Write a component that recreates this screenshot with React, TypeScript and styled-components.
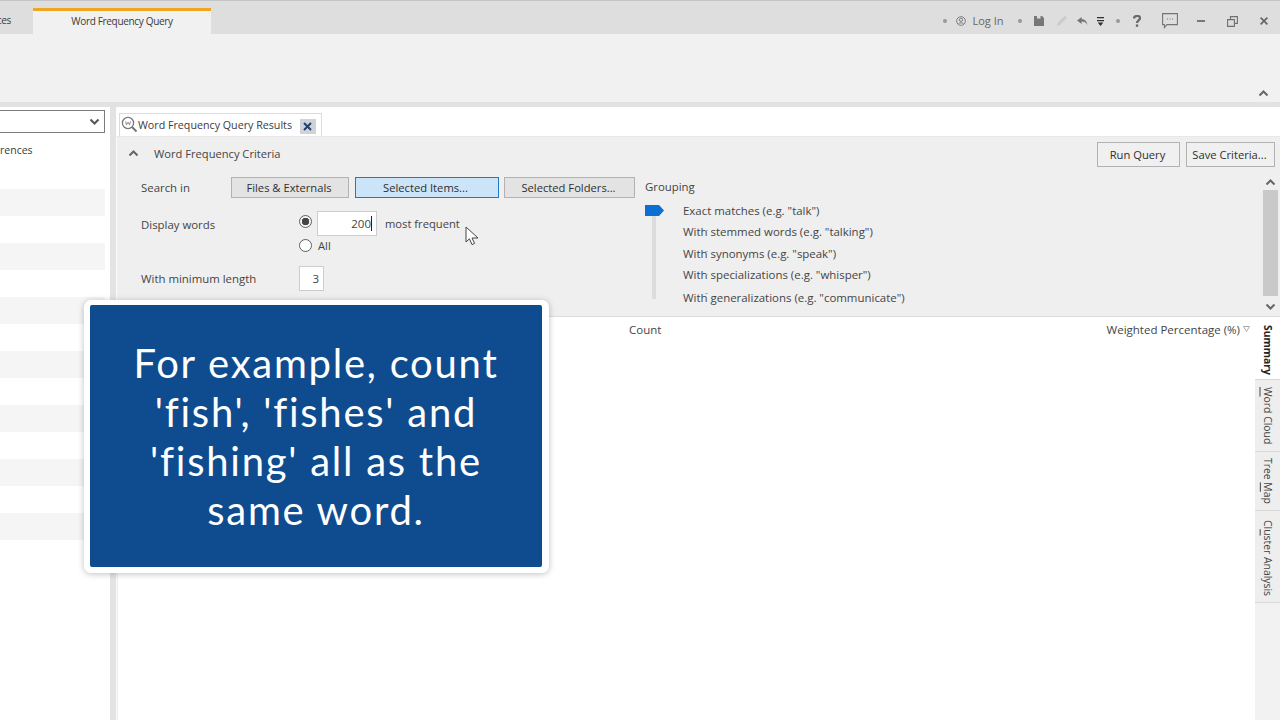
import styled, { createGlobalStyle } from 'styled-components';

const GlobalStyle = createGlobalStyle`
  html, body {
    margin: 0;
    padding: 0;
    background: #ffffff;
    overflow: hidden;
  }
  body {
    font-family: "Open Sans", "Noto Sans", sans-serif;
    font-size: 12px;
    color: #3c3c3c;
  }
`;

const Page = styled.div`
  position: relative;
  width: 1280px;
  height: 720px;
  overflow: hidden;
  display: flex;
  flex-direction: column;
`;

const TitleBar = styled.div`
  height: 33px;
  flex: none;
  border-top: 1px solid #c4c4c4;
  background: #dedede;
  display: flex;
  align-items: flex-end;
`;

const OldTab = styled.div`
  width: 33px;
  height: 26px;
  flex: none;
  box-sizing: border-box;
  padding: 0 22px 2px 0;
  display: flex;
  align-items: center;
  justify-content: flex-end;
  font-size: 10px;
  letter-spacing: -0.3px;
  color: #3a3a3a;
  overflow: hidden;
`;

const ActiveTab = styled.div`
  width: 178px;
  height: 26px;
  flex: none;
  box-sizing: border-box;
  padding-bottom: 3px;
  display: flex;
  align-items: center;
  justify-content: center;
  background: #f1f1f1;
  border-top: 3px solid #f0a51e;
  font-size: 10px;
  letter-spacing: -0.33px;
  color: #3a3a3a;
`;

const WindowTools = styled.div`
  margin-left: auto;
  height: 26px;
  display: flex;
  align-items: center;
  color: #6d6d6d;
`;

const Dot = styled.span<{ $gap: number }>`
  width: 4px;
  height: 4px;
  border-radius: 50%;
  background: #999999;
  margin-right: ${(p) => p.$gap}px;
  flex: none;
`;

const ToolIcon = styled.svg<{ $gap: number }>`
  flex: none;
  margin-right: ${(p) => p.$gap}px;
`;

const LogIn = styled.span`
  font-size: 11px;
  line-height: 13px;
  margin-top: -2px;
  color: #666666;
  margin-right: 14.5px;
`;

const Ribbon = styled.div`
  height: 68px;
  flex: none;
  background: #f1f1f1;
  display: flex;
  align-items: flex-end;
  justify-content: flex-end;
  padding: 0 11px 5px 0;
  box-sizing: border-box;
`;

const RibbonEdge = styled.div`
  height: 5px;
  flex: none;
  background: #e2e2e2;
`;

const Main = styled.div`
  flex: 1;
  display: flex;
  min-height: 0;
`;

const LeftPanel = styled.div`
  width: 110px;
  flex: none;
  padding-top: 3px;
  background: #ffffff;
`;

const FolderSelect = styled.div`
  width: 105px;
  height: 23px;
  box-sizing: border-box;
  border: 1px solid #7c7c7c;
  border-left: 0;
  display: flex;
  align-items: center;
  justify-content: flex-end;
  padding-right: 4px;
  color: #555555;
`;

const SearchRows = styled.div`
  margin-top: 2px;
  width: 105px;
`;

const SearchRow = styled.div<{ $striped?: boolean }>`
  height: 27px;
  background: ${(p) => (p.$striped ? '#f5f5f5' : '#ffffff')};
  font-size: 10.5px;
  line-height: 31px;
  color: #3c3c3c;
`;

const Splitter = styled.div`
  width: 7px;
  flex: none;
  background: linear-gradient(to right, #e3e3e3 0 5.5px, #fbfbfb 5.5px);
`;

const ResultsArea = styled.div`
  flex: 1;
  min-width: 0;
  display: flex;
  flex-direction: column;
`;

const DocTabs = styled.div`
  height: 29px;
  flex: none;
  display: flex;
  align-items: flex-end;
  padding-left: 2px;
  background: #ffffff;
  border-bottom: 1px solid #e8e8e8;
`;

const DocTab = styled.div`
  height: 23px;
  width: 203px;
  box-sizing: border-box;
  border: 1px solid #dcdcdc;
  border-bottom: 0;
  display: flex;
  align-items: center;
  padding-left: 1px;
  font-size: 10.7px;
  color: #3c3c3c;
  white-space: nowrap;
  svg {
    flex: none;
  }
`;

const DocClose = styled.span`
  width: 16px;
  height: 15px;
  flex: none;
  margin-left: 8px;
  margin-top: 3px;
  background: #cfd3d8;
  display: flex;
  align-items: center;
  justify-content: center;
`;

const Criteria = styled.div`
  height: 179px;
  flex: none;
  background: #efefef;
  border-bottom: 1px solid #dcdcdc;
`;

const CriteriaHead = styled.div`
  height: 32px;
  display: flex;
  align-items: center;
  padding: 0 5px 0 11px;
`;

const CriteriaTitle = styled.span`
  margin-left: 15px;
  font-size: 11.15px;
  color: #444444;
`;

const HeadButtons = styled.div`
  margin-left: auto;
  margin-top: 3px;
  display: flex;
  gap: 6px;
`;

const Button = styled.button<{ $width: number; $height?: number; $selected?: boolean; $flat?: boolean }>`
  width: ${(p) => p.$width}px;
  height: ${(p) => p.$height ?? 25}px;
  flex: none;
  padding: 0 2px 1px 0;
  box-sizing: border-box;
  border: 1px solid ${(p) => (p.$selected ? '#1f78c8' : '#b2b2b2')};
  background: ${(p) => (p.$selected ? '#cce4f7' : p.$flat ? '#f0f0f0' : '#e3e3e3')};
  font-family: inherit;
  font-size: 11.2px;
  color: #2f2f2f;
`;

const CriteriaBody = styled.div`
  display: flex;
  height: 147px;
`;

const FormColumn = styled.div`
  width: 528px;
  flex: none;
  padding: 8px 0 0 24px;
  box-sizing: border-box;
  display: flex;
  flex-direction: column;
`;

const FormRow = styled.div`
  display: flex;
  align-items: center;
`;

const FieldLabel = styled.span`
  width: 90px;
  flex: none;
  font-size: 11.4px;
  color: #444444;
`;

const SearchButtons = styled.div`
  display: flex;
  gap: 5.5px;
`;

const DisplayRow = styled.div`
  display: flex;
  margin-top: 13px;
`;

const DisplayLabel = styled(FieldLabel)`
  width: 158px;
  padding-top: 6px;
`;

const DisplayOptions = styled.div`
  display: flex;
  flex-direction: column;
  gap: 2px;
`;

const RadioRow = styled.div`
  display: flex;
  align-items: center;
  font-size: 11.2px;
  color: #444444;
`;

const Radio = styled.span<{ $checked?: boolean }>`
  width: 13px;
  height: 13px;
  box-sizing: border-box;
  border: 1px solid #5f5f5f;
  border-radius: 50%;
  background: ${(p) => (p.$checked ? 'radial-gradient(circle, #444 0 3.5px, #f4f4f4 4px)' : '#ffffff')};
  flex: none;
  margin-top: ${(p) => (p.$checked ? '-5px' : '0')};
`;

const RadioText = styled.span<{ $gap: number }>`
  margin-left: ${(p) => p.$gap}px;
`;

const NumberBox = styled.div<{ $width: number; $height: number; $gap?: number }>`
  width: ${(p) => p.$width}px;
  height: ${(p) => p.$height}px;
  margin-left: ${(p) => p.$gap ?? 0}px;
  box-sizing: border-box;
  border: 1px solid #cdcdcd;
  background: #ffffff;
  display: flex;
  align-items: center;
  justify-content: flex-end;
  padding-right: 4px;
  font-size: 11.5px;
  color: #444444;
`;

const Caret = styled.span`
  width: 1px;
  height: 15px;
  background: #222222;
`;

const LengthLabel = styled(FieldLabel)`
  width: 158px;
`;

const LengthRow = styled(FormRow)`
  margin-top: 13px;
`;

const GroupingColumn = styled.div`
  flex: 1;
  display: flex;
  flex-direction: column;
`;

const GroupingTitle = styled.div`
  font-size: 11.4px;
  color: #444444;
  margin-top: 10px;
`;

const GroupingList = styled.div`
  position: relative;
  margin-top: 6px;
  padding-left: 38px;
  display: flex;
  flex-direction: column;
`;

const Track = styled.span`
  position: absolute;
  left: 7px;
  top: 15px;
  width: 4px;
  height: 84px;
  background: #dcdcdc;
`;

const Thumb = styled.svg`
  position: absolute;
  left: 0;
  top: 5px;
`;

const GroupingItem = styled.div<{ $height: number }>`
  position: relative;
  height: ${(p) => p.$height}px;
  display: flex;
  align-items: center;
  font-size: 11.45px;
  color: #444444;
  white-space: nowrap;
  &::before {
    content: '';
    position: absolute;
    left: 22px;
    top: 9px;
    width: 3px;
    height: 1px;
    background: #b4b4b4;
  }
`;

const ScrollBar = styled.div`
  width: 15px;
  margin: 5px 2px 0 auto;
  display: flex;
  flex-direction: column;
  align-items: center;
  color: #666666;
`;

const ScrollEnd = styled.div<{ $height: number }>`
  height: ${(p) => p.$height}px;
  flex: none;
  display: flex;
  align-items: center;
  justify-content: center;
`;

const ScrollThumb = styled.div`
  flex: 1;
  width: 15px;
  background: #c9c9c9;
`;

const ResultsBody = styled.div`
  flex: 1;
  display: flex;
  min-height: 0;
`;

const Table = styled.div`
  flex: 1;
  min-width: 0;
  border-left: 1px solid #ededed;
`;

const TableHead = styled.div`
  height: 24px;
  display: flex;
  align-items: center;
  font-size: 11.5px;
  color: #444444;
  padding: 0 5px 0 511px;
`;

const WeightHead = styled.span`
  margin-left: auto;
  display: flex;
  align-items: center;
  gap: 3px;
`;

const SideTabs = styled.div`
  width: 25px;
  flex: none;
  background: #f2f2f2;
  display: flex;
  flex-direction: column;
  font-size: 10.4px;
  color: #3c3c3c;
`;

const SideTab = styled.div<{ $height: number; $pad: number; $active?: boolean }>`
  height: ${(p) => p.$height}px;
  box-sizing: border-box;
  writing-mode: vertical-rl;
  display: flex;
  align-items: center;
  padding: ${(p) => p.$pad}px 0 0 0;
  font-weight: ${(p) => (p.$active ? 700 : 400)};
  color: ${(p) => (p.$active ? '#222222' : '#444444')};
  background: ${(p) => (p.$active ? '#ffffff' : '#eeeeee')};
  border-bottom: 1px solid #d8d8d8;
  white-space: nowrap;
  u {
    text-underline-offset: 1px;
  }
`;

const Callout = styled.div`
  position: absolute;
  left: 84px;
  top: 300px;
  width: 465px;
  height: 273px;
  box-sizing: border-box;
  padding: 5px 7px 6px 6px;
  background: #ffffff;
  border-radius: 7px;
  box-shadow: 0 1px 6px rgba(0, 0, 0, 0.25);
  display: flex;
`;

const CalloutInner = styled.div`
  flex: 1;
  padding-top: 2px;
  background: #0f4c8f;
  border-radius: 2px;
  display: flex;
  align-items: center;
  justify-content: center;
  text-align: center;
  color: #ffffff;
  font-family: Lato, "Open Sans", sans-serif;
  font-size: 40px;
  line-height: 49px;
  letter-spacing: 1.75px;
`;

const Pointer = styled.svg`
  position: absolute;
  left: 465px;
  top: 226px;
`;

const Chevron = ({ up = true, color = '#666666' }: { up?: boolean; color?: string }) => (
  <svg width="11" height="7" viewBox="0 0 11 7" fill="none">
    <path d={up ? 'M1.5 5.5 5.5 1.5l4 4' : 'M1.5 1.5l4 4 4-4'} stroke={color} strokeWidth="2" />
  </svg>
);

const groupingItems = [
  { label: 'Exact matches (e.g. "talk")', height: 21 },
  { label: 'With stemmed words (e.g. "talking")', height: 21 },
  { label: 'With synonyms (e.g. "speak")', height: 23 },
  { label: 'With specializations (e.g. "whisper")', height: 19 },
  { label: 'With generalizations (e.g. "communicate")', height: 27 },
];

const rows = [false, false, true, false, true, false, true, false, true, false, true, false, true, false, true];

const App = () => (
  <Page>
    <GlobalStyle />
    <TitleBar>
      <OldTab>ces</OldTab>
      <ActiveTab>Word Frequency Query</ActiveTab>
      <WindowTools>
        <Dot $gap={9} />
        <ToolIcon $gap={6} width="10" height="10" viewBox="0 0 11 11" fill="none" stroke="#777" strokeWidth="1">
          <circle cx="5.5" cy="5.5" r="4.8" />
          <circle cx="5.5" cy="4.2" r="1.8" />
          <path d="M2.5 8.8c1-1.7 5-1.7 6 0" />
        </ToolIcon>
        <LogIn>Log In</LogIn>
        <Dot $gap={12} />
        <ToolIcon $gap={13} width="10" height="10" viewBox="0 0 10 10">
          <path d="M0 0h3v2.5h3.500V0H8l2 2v8H0z" fill="#777777" />
        </ToolIcon>
        <ToolIcon $gap={10} width="10" height="10" viewBox="0 0 10 10" fill="none" stroke="#c8c8c8" strokeWidth="1.3">
          <path d="M1 9 2 6.5 8 1l1 1-6 6z" />
        </ToolIcon>
        <ToolIcon $gap={9} width="11" height="9" viewBox="0 0 11 9">
          <path d="M4.600 0 0 3.400 4.600 7V4.600c2.600 0 4.400.8 5.900 3.600C10 4.300 8 2.100 4.600 1.900z" fill="#777" />
        </ToolIcon>
        <ToolIcon $gap={12} width="7" height="9" viewBox="0 0 7 9">
          <path d="M0 0h7v1.300H0zM0 3h7v1.300H0zM.7 5.600h5.600L3.500 9z" fill="#2f2f2f" />
        </ToolIcon>
        <Dot $gap={13} />
        <ToolIcon $gap={21} width="8" height="12" viewBox="0 0 8 12" fill="none" stroke="#6a6a6a" strokeWidth="2.300">
          <path d="M1 3.400C1 .6 7-.2 7 3c0 2.200-3 2.400-3 5" />
          <path d="M4 9.400v2.400" />
        </ToolIcon>
        <ToolIcon $gap={19} width="16" height="16" viewBox="0 0 16 16" fill="none" stroke="#757575" strokeWidth="1.100">
          <path d="M.6.6h14.800v11H5l-2.600 3v-3H.6z" />
          <path d="M5 6h1M7.500 6h1M10 6h1" />
        </ToolIcon>
        <ToolIcon $gap={22} width="8" height="2" viewBox="0 0 8 2">
          <path d="M0 0h8v2H0z" fill="#777" />
        </ToolIcon>
        <ToolIcon $gap={22} width="11" height="11" viewBox="0 0 11 11" fill="none" stroke="#707070" strokeWidth="1.100">
          <path d="M.6 3.600h6.800v6.800H.6zM3.500 3.400V.6h6.900v6.800H7.600" />
        </ToolIcon>
        <ToolIcon $gap={12} width="8" height="8" viewBox="0 0 8 8" fill="none" stroke="#666" strokeWidth="1.700">
          <path d="m.6.6 6.800 6.800M7.400.6.6 7.400" />
        </ToolIcon>
      </WindowTools>
    </TitleBar>
    <Ribbon>
      <Chevron />
    </Ribbon>
    <RibbonEdge />
    <Main>
      <LeftPanel>
        <FolderSelect>
          <Chevron up={false} color="#555555" />
        </FolderSelect>
        <SearchRows>
          {rows.map((striped, i) => (
            <SearchRow key={i} $striped={striped}>
              {i === 0 ? 'rences' : ''}
            </SearchRow>
          ))}
        </SearchRows>
      </LeftPanel>
      <Splitter />
      <ResultsArea>
        <DocTabs>
          <DocTab>
            <svg width="17" height="18" viewBox="0 0 17 18" fill="none" stroke="#777" strokeWidth="1.300">
              <circle cx="7" cy="7" r="5.600" />
              <path d="m11 11 4.500 4.500" strokeWidth="2" />
              <path d="m4.500 5.500 1 3.200 1.500-2.400 1.500 2.400 1-3.200" strokeWidth=".9" />
            </svg>
            Word Frequency Query Results
            <DocClose>
              <svg width="9" height="9" viewBox="0 0 9 9" fill="none" stroke="#24406e" strokeWidth="2">
                <path d="m1 1 7 7M8 1 1 8" />
              </svg>
            </DocClose>
          </DocTab>
        </DocTabs>
        <Criteria>
          <CriteriaHead>
            <Chevron />
            <CriteriaTitle>Word Frequency Criteria</CriteriaTitle>
            <HeadButtons>
              <Button $width={83} $flat>Run Query</Button>
              <Button $width={89} $flat>Save Criteria...</Button>
            </HeadButtons>
          </CriteriaHead>
          <CriteriaBody>
            <FormColumn>
              <FormRow>
                <FieldLabel>Search in</FieldLabel>
                <SearchButtons>
                  <Button $width={118} $height={21}>Files &amp; Externals</Button>
                  <Button $width={144} $height={21} $selected>Selected Items...</Button>
                  <Button $width={131} $height={21}>Selected Folders...</Button>
                </SearchButtons>
              </FormRow>
              <DisplayRow>
                <DisplayLabel>Display words</DisplayLabel>
                <DisplayOptions>
                  <RadioRow>
                    <Radio $checked />
                    <NumberBox $width={60} $height={25} $gap={5}>
                      200<Caret />
                    </NumberBox>
                    <RadioText $gap={8}>most frequent</RadioText>
                  </RadioRow>
                  <RadioRow>
                    <Radio />
                    <RadioText $gap={6}>All</RadioText>
                  </RadioRow>
                </DisplayOptions>
              </DisplayRow>
              <LengthRow>
                <LengthLabel>With minimum length</LengthLabel>
                <NumberBox $width={25} $height={25}>3</NumberBox>
              </LengthRow>
            </FormColumn>
            <GroupingColumn>
              <GroupingTitle>Grouping</GroupingTitle>
              <GroupingList>
                <Track />
                <Thumb width="20" height="11" viewBox="0 0 20 11">
                  <path d="M0 0h14l5 5.500-5 5.500H0z" fill="#0b6fd3" />
                </Thumb>
                {groupingItems.map((item) => (
                  <GroupingItem key={item.label} $height={item.height}>{item.label}</GroupingItem>
                ))}
              </GroupingList>
            </GroupingColumn>
            <ScrollBar>
              <ScrollEnd $height={16}><Chevron /></ScrollEnd>
              <ScrollThumb />
              <ScrollEnd $height={20}><Chevron up={false} /></ScrollEnd>
            </ScrollBar>
          </CriteriaBody>
        </Criteria>
        <ResultsBody>
          <Table>
            <TableHead>
              Count
              <WeightHead>
                Weighted Percentage (%)
                <svg width="7" height="6" viewBox="0 0 7 6" fill="none" stroke="#aaa">
                  <path d="M.5.5h6L3.500 5.500z" />
                </svg>
              </WeightHead>
            </TableHead>
          </Table>
          <SideTabs>
            <SideTab $height={63} $pad={8} $active>Summary</SideTab>
            <SideTab $height={72} $pad={7}><span><u>W</u>ord Cloud</span></SideTab>
            <SideTab $height={59} $pad={6}><span>Tree <u>M</u>ap</span></SideTab>
            <SideTab $height={92} $pad={9}><span>Cl<u>u</u>ster Analysis</span></SideTab>
          </SideTabs>
        </ResultsBody>
      </ResultsArea>
    </Main>
    <Callout>
      <CalloutInner>
        <span>
          For example, count
          <br />
          'fish', 'fishes' and
          <br />
          'fishing' all as the
          <br />
          same word.
        </span>
      </CalloutInner>
    </Callout>
    <Pointer width="14" height="20" viewBox="0 0 14 20">
      <path d="M1 1v15l3.400-3.200L7 18.600l2.600-1.200-2.600-5.400h6z" fill="#fff" stroke="#444" strokeWidth="1" />
    </Pointer>
  </Page>
);

export default App;
